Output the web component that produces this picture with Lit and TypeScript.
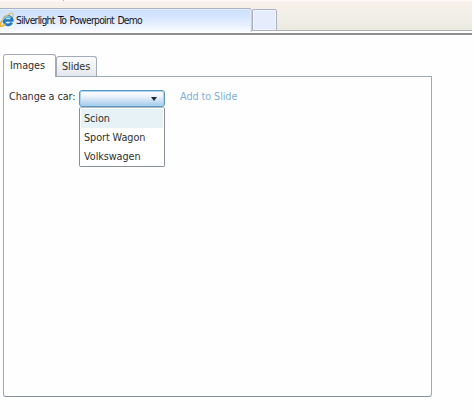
import { LitElement, html, css, svg } from "lit";
import { customElement, property } from "lit/decorators.js";

@customElement("browser-tabs")
class BrowserTabs extends LitElement {
  static styles = css`
    :host { display: block; height: 35px; position: relative; }
    .strip {
      box-sizing: border-box; width: 472px; height: 31px; padding-top: 8px;
      display: flex; align-items: flex-start;
      background: linear-gradient(#fdfaf8 0, #fdfaf8 1px, #f8efeb 2px, #f3f0e9 12px, #ecebe2 28px);
      border-bottom: 1px solid #aeb1ba;
    }
    .tab {
      box-sizing: border-box; width: 252px; height: 24px; flex: none;
      display: flex; align-items: center; padding-bottom: 1px;
      border-top: 1px solid #a9b1c5; border-right: 1px solid #c3cbdc;
      border-top-right-radius: 3px;
      background: linear-gradient(#cbdffd 0, #d5e5fd 8px, #f3f7ff 20px, #fcfdff);
      box-shadow: inset -1px 1px 0 #e4edfb;
    }
    .tab svg { flex: none; }
    .title {
      font: 10.3px/14px "DejaVu Sans Condensed", "DejaVu Sans", sans-serif;
      font-stretch: condensed;
      letter-spacing: -0.72px; word-spacing: 1.2px;
      color: #10131c; white-space: nowrap; margin-left: 1px;
    }
    .blank {
      box-sizing: border-box; width: 25px; height: 22px; margin-top: 1px; flex: none;
      border: 1px solid #a9b1c5; border-radius: 2px; background: #e6ecfc;
      box-shadow: inset 0 0 0 1px #f3f6ff;
    }
    .edge {
      box-sizing: border-box; width: 472px; height: 4px; background: #fff;
      border-bottom: 1px solid #90918f; box-shadow: inset 0 -1px #8b8c89;
    }
    .mark { position: absolute; left: 63px; top: 0; width: 1px; height: 1px; background: #b3aeb2; }
  `;
  render() {
    return html`
      <div class="strip">
        <div class="tab">
          <svg width="15" height="16" viewBox="0 0 15 16">
            ${svg`
              <path d="M11.8 10.6 A4.3 4.3 0 1 1 12.2 7.6 L12.2 8.5 H5" fill="none" stroke="#1c78c4" stroke-width="2.7"/>
              <path d="M4.2 6.4 Q7.4 3 10.8 5.6" fill="none" stroke="#62c4f2" stroke-width="1.4"/>
              <path d="M2.2 8.6 C-.2 12 -.2 14.4 1.4 14.2 C3 14 4.2 13 5.4 12" fill="none" stroke="#f0b42e" stroke-width="1.8"/>
              <path d="M2.2 8.6 C4.4 4.6 9 1.2 12 1.3 C14 1.4 13.8 3.2 12.8 5" fill="none" stroke="#e6c26c" stroke-width="1.3"/>`}
          </svg>
          <span class="title">Silverlight To Powerpoint Demo</span>
        </div>
        <div class="blank"></div>
      </div>
      <div class="edge"></div>
      <div class="mark"></div>`;
  }
}

@customElement("car-picker")
class CarPicker extends LitElement {
  @property({ type: Array }) items = ["Scion", "Sport Wagon", "Volkswagen"];
  static styles = css`
    :host { display: block; position: relative; width: 86px; height: 18px; }
    .box {
      box-sizing: border-box; width: 86px; height: 17px; border: 1px solid #5b97bf; border-radius: 3px;
      background: linear-gradient(#fff 0, #eef4fc 5px, #c9def3 10px, #a3cbe9);
      box-shadow: inset 0 0 0 1px #a9d4ee;
      display: flex; align-items: center; justify-content: flex-end; padding-right: 7px;
    }
    .menu {
      position: absolute; left: 0; top: 17px; box-sizing: border-box; width: 86px; height: 60px;
      border: 1px solid #899098; border-top-color: #b4bcc3; border-radius: 2px; background: #fff; padding: 1px;
    }
    .item { height: 19px; line-height: 19px; padding-left: 3px; white-space: nowrap; color: #303030; }
    .item.active { background: #e6f2f6; }
  `;
  render() {
    return html`
      <div class="box"><svg width="6" height="4" viewBox="0 0 6 4"><path d="M0 0H6L3 4Z" fill="#1c2733"/></svg></div>
      <div class="menu">
        ${this.items.map((t, i) => html`<div class="item ${i === 0 ? "active" : ""}">${t}</div>`)}
      </div>`;
  }
}

@customElement("app-root")
class AppRoot extends LitElement {
  static styles = css`
    :host {
      display: block; width: 474px; height: 420px; overflow: hidden; background: #fefefe;
      font: 9.7px/14px "DejaVu Sans", sans-serif; letter-spacing: -0.08px; color: #303030;
    }
    .page { padding: 19px 0 0 3px; }
    .tabs { display: flex; align-items: flex-end; height: 22px; }
    .tab { box-sizing: border-box; border: 1px solid #a5abb6; border-bottom: 0; border-radius: 3px 3px 0 0; white-space: nowrap; }
    .tab.on { width: 53px; height: 23px; padding: 4px 0 0 6px; background: #fefefe; position: relative; margin-bottom: -1px; }
    .tab.off { width: 41px; height: 20px; padding: 3px 0 0 5px; background: linear-gradient(#fcfcfd, #e4e7ed); }
    .panel {
      box-sizing: border-box; width: 429px; height: 321px; border: 1px solid #a0a8b4; border-bottom-color: #87909b;
      border-radius: 0 1px 3px 3px; padding: 13px 0 0 5px;
    }
    .row { display: flex; align-items: flex-start; }
    .label { width: 70px; white-space: nowrap; }
    .link { margin-left: 15px; color: #7fb0db; white-space: nowrap; }
  `;
  render() {
    return html`
      <browser-tabs></browser-tabs>
      <div class="page">
        <div class="tabs"><div class="tab on">Images</div><div class="tab off">Slides</div></div>
        <div class="panel">
          <div class="row">
            <span class="label">Change a car:</span>
            <car-picker></car-picker>
            <span class="link">Add to Slide</span>
          </div>
        </div>
      </div>`;
  }
}
